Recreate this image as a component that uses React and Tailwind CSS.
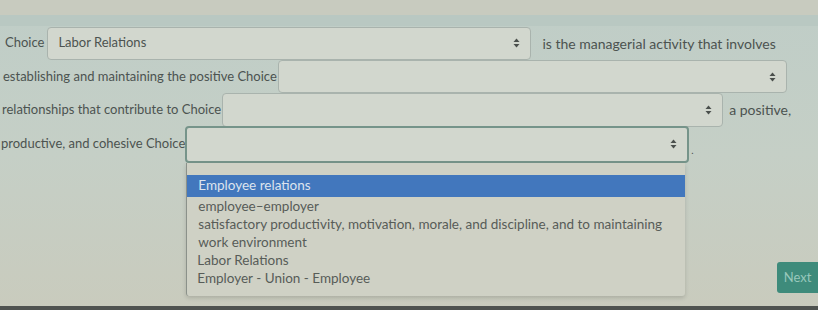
import React from "react";

const Arrows = () => (
  <svg width="7" height="10" viewBox="0 0 7 10" className="shrink-0">
    <path d="M3.5 0.5 L6.5 4 L0.5 4 Z" fill="#4a4f4c" />
    <path d="M0.5 6 L6.5 6 L3.5 9.5 Z" fill="#4a4f4c" />
  </svg>
);

const Select = ({ w, h, value, focused }) => (
  <div
    className={`flex items-center justify-between rounded-[4px] bg-[#d2d7ce] pl-[10px] pr-[10px] ${
      focused ? "border-2 border-[#76948a]" : "border border-[#a9b3ad]"
    } ${w} ${h}`}
  >
    <span className="text-[13px] text-[#4c5350]">{value}</span>
    <Arrows />
  </div>
);

export default function App() {
  return (
    <div
      className="relative h-[310px] w-[818px] overflow-hidden bg-gradient-to-b from-[#bfcdc7] via-[#c5cfc6] to-[#c9cbbd] text-[#4c5350]"
      style={{ fontFamily: "Lato, 'Open Sans', sans-serif" }}
    >
      <div className="h-[15px] bg-[#c8cbbf]" />
      <div className="h-[11px] bg-[#b9c8c2]" />
      <div className="flex flex-col text-[13px]">
        {/* row 1 */}
        <div className="flex h-[34px] items-center">
          <span className="ml-[5px] mr-[3px]">Choice</span>
          <Select w="w-[484px]" h="h-[33px]" value="Labor Relations" />
          <span className="ml-[11px] text-[14px]">is the managerial activity that involves</span>
        </div>
        {/* row 2 */}
        <div className="flex h-[33px] items-center">
          <span className="ml-[3px] mr-[1px]">establishing and maintaining the positive Choice</span>
          <Select w="w-[509px]" h="h-[33px]" value="" />
        </div>
        {/* row 3 */}
        <div className="flex h-[33px] items-center">
          <span className="ml-[2px] mr-[1px]">relationships that contribute to Choice</span>
          <Select w="w-[501px]" h="h-[34px]" value="" />
          <span className="ml-[6px] text-[14px]">a positive,</span>
        </div>
        {/* row 4 */}
        <div className="relative flex h-[36px] items-center">
          <span className="ml-[1px]">productive, and cohesive Choice</span>
          <div className="relative">
            <Select w="w-[504px]" h="h-[37px]" value="" focused />
            <div className="absolute left-[1px] top-[37px] z-10 flex w-[499px] flex-col rounded-b-[3px] border-l border-[#8b918a] bg-[#cfd1c5] pb-[9px] text-[13.5px] text-[#575c58] shadow-[0_2px_4px_rgba(0,0,0,0.15)]">
              <div className="h-[12px]" />
              <div className="h-[22px] bg-[#4277bd] pl-[11px] pt-[1px] leading-[18px] text-[#dde4ee]">Employee relations</div>
              <div className="pl-[11px] leading-[18px]">employee–employer</div>
              <div className="pl-[11px] leading-[18px]">
                satisfactory productivity, motivation, morale, and discipline, and to maintaining
                <br />
                work environment
              </div>
              <div className="pl-[10px] leading-[18px]">Labor Relations</div>
              <div className="pl-[10px] leading-[18px]">Employer - Union - Employee</div>
            </div>
          </div>
          <span className="ml-[2px] mt-[12px] text-[10px]">.</span>
        </div>
        {/* next button */}
        <div className="mt-[100px] flex justify-end">
          <div className="flex h-[31px] w-[41px] items-center justify-center rounded-l-[3px] bg-[#3e8b7b] text-[13px] text-[#98c8bb]">
            Next
          </div>
        </div>
      </div>
      <div className="absolute bottom-0 left-0 h-[4px] w-full bg-[#4f5350]" />
    </div>
  );
}
